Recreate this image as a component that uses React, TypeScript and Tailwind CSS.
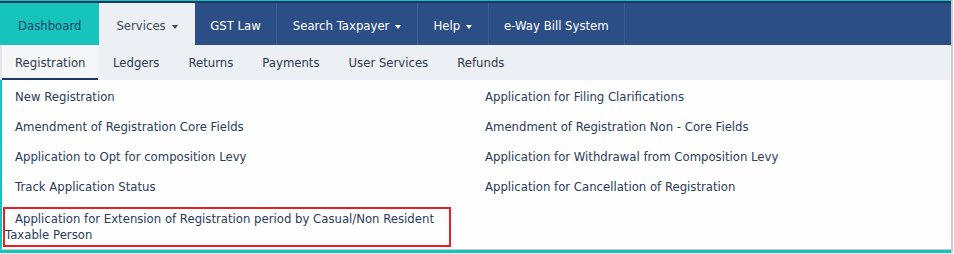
const navItems = [
  { label: 'Dashboard', caret: false, kind: 'teal' },
  { label: 'Services', caret: true, kind: 'light' },
  { label: 'GST Law', caret: false, kind: 'dark' },
  { label: 'Search Taxpayer', caret: true, kind: 'dark' },
  { label: 'Help', caret: true, kind: 'dark' },
  { label: 'e-Way Bill System', caret: false, kind: 'dark' },
];

const subTabs = ['Registration', 'Ledgers', 'Returns', 'Payments', 'User Services', 'Refunds'];

const leftLinks = [
  'New Registration',
  'Amendment of Registration Core Fields',
  'Application to Opt for composition Levy',
  'Track Application Status',
];

const rightLinks = [
  'Application for Filing Clarifications',
  'Amendment of Registration Non - Core Fields',
  'Application for Withdrawal from Composition Levy',
  'Application for Cancellation of Registration',
];

function Caret() {
  return <span className="ml-[6px] inline-block h-0 w-0 border-x-[3.5px] border-t-[4px] border-x-transparent border-t-current align-middle" />;
}

export default function App() {
  return (
    <div
      className="h-[254px] w-[954px] overflow-hidden bg-white text-[11.7px]"
      style={{ fontFamily: '"DejaVu Sans", Verdana, sans-serif' }}
    >
      <div className="w-[953px] border-r-2 border-[#c9cbcd]">
        {/* top nav */}
        <div className="border-t border-[#17c4bb]">
          <div className="flex h-[44px] border-t-2 border-[#1e3865] bg-[#2c4e86]">
            {navItems.map(item => (
              <div
                key={item.label}
                className={
                  item.kind === 'teal'
                    ? 'flex items-center bg-[#17c4bb] px-[18px] pt-[5px] text-[#1f4470]'
                    : item.kind === 'light'
                    ? 'flex items-center bg-[#eceff3] px-[17px] pt-[5px] text-[#3b4b60]'
                    : 'flex items-center border-r border-[#3c5c92] px-[15.5px] pt-[5px] text-white'
                }
              >
                {item.label}
                {item.caret && <Caret />}
              </div>
            ))}
          </div>
        </div>

        {/* sub nav */}
        <div className="flex h-[35px] border-l-2 border-[#e2e5e9] bg-[#eceff3]">
          {subTabs.map((t, i) => (
            <div
              key={t}
              className={
                i === 0
                  ? 'flex items-center border-b-2 border-[#1e3865] bg-[#f5f6f7] px-[13px] pt-[4px] text-[#2f3a4d]'
                  : 'flex items-center px-[14.5px] pt-[3px] text-[#2f3a4d]'
              }
            >
              {t}
            </div>
          ))}
        </div>

        {/* links */}
        <div className="h-[170px] border-b border-[#c9cbcd] border-l-2 border-l-[#17c4bb] bg-[#fdfefd] text-[#2c3b5c]">
          <div className="grid grid-cols-[470px_1fr] pt-[3px]">
            <div className="flex flex-col">
              {leftLinks.map(l => (
                <div key={l} className="flex h-[30px] items-center pl-[13px]">{l}</div>
              ))}
              <div className="ml-[1px] mt-[4px] w-[448px] border-2 border-[#ee1c24] py-[2px] leading-[16px]">
                <span className="pl-[10px]">Application for Extension of Registration period by Casual/Non Resident</span>
                <br />
                Taxable Person
              </div>
            </div>
            <div className="flex flex-col">
              {rightLinks.map(l => (
                <div key={l} className="flex h-[30px] items-center pl-[13px]">{l}</div>
              ))}
            </div>
          </div>
        </div>
        <div className="h-[3px] bg-[#17c4bb]" />
      </div>
    </div>
  );
}
